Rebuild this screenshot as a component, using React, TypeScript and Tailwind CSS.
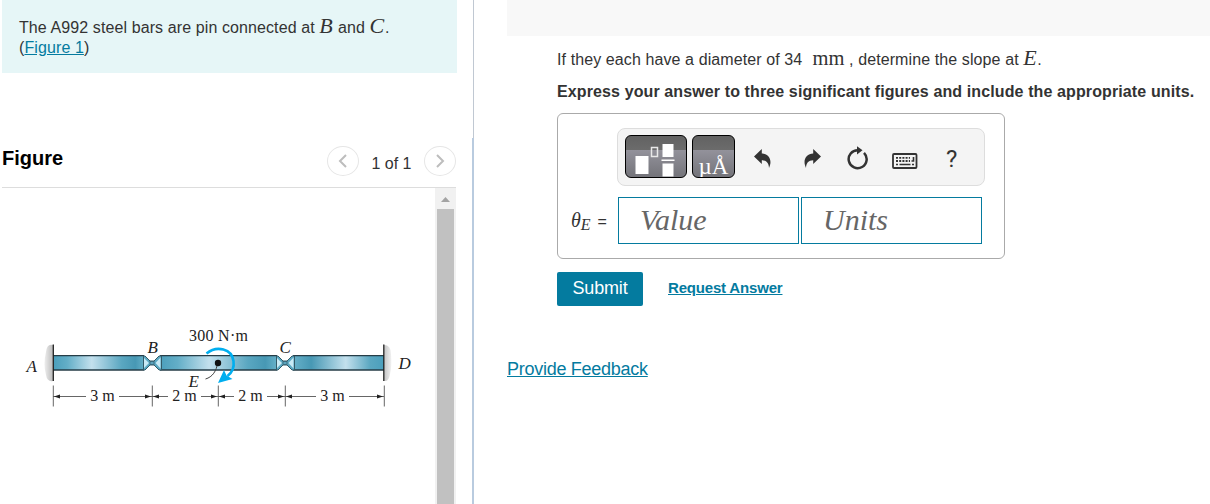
import type { ReactNode } from 'react';

function MathVar({ children }: { children: ReactNode }) {
  return (
    <span className="inline-block font-['Liberation_Serif',serif] text-[22px] leading-none tracking-[0.7px] italic">
      {children}
    </span>
  );
}

function PagerButton({ direction }: { direction: 'prev' | 'next' }) {
  return (
    <button
      aria-label={direction}
      className="flex h-[30px] w-8 items-center justify-center rounded-[50%] border border-[#e6e6e6] text-[#bdbdbd]"
    >
      <svg width="12" height="16" viewBox="0 0 12 16" fill="none" stroke="currentColor" strokeWidth="2">
        <path d={direction === 'prev' ? 'M9 2 3 8l6 6' : 'M3 2l6 6-6 6'} />
      </svg>
    </button>
  );
}

const segments = [
  { x1: 53, x2: 152, label: '3 m', cx: 102 },
  { x1: 152, x2: 218, label: '2 m', cx: 184 },
  { x1: 218, x2: 285, label: '2 m', cx: 250 },
  { x1: 285, x2: 384, label: '3 m', cx: 332 },
];

function Pin({ x }: { x: number }) {
  return (
    <g>
      <path
        d={`M${x - 8.5} 356 H${x - 7} L${x - 2} 361 H${x + 2} L${x + 7} 356 H${x + 9.5} V370 H${x + 7} L${x + 2} 365 H${x - 2} L${x - 7} 370 H${x - 8.5}Z`}
        fill="#5ba9c3"
        stroke="#345b68"
        strokeWidth="1"
      />
      <path d={`M${x - 8} 358v10l5-5zM${x + 8.5} 357.500v11l-5-5.500z`} fill="#c9eaf5" />
      <rect x={x - 2} y="361.5" width="4" height="3" fill="#5ba4bd" stroke="#345b68" strokeWidth=".7" />
    </g>
  );
}

function BeamDiagram() {
  return (
    <svg
      width="433"
      height="316"
      viewBox="2 188 433 316"
      className="block shrink-0 font-['Liberation_Serif',serif]"
      fill="#222"
    >
      <defs>
        <linearGradient id="steel">
          <stop offset="0" stopColor="#4b9fbc" />
          <stop offset=".15" stopColor="#63aec7" />
          <stop offset=".42" stopColor="#c3e0ed" />
          <stop offset=".75" stopColor="#5aa7c1" />
          <stop offset=".9" stopColor="#4798b4" />
          <stop offset="1" stopColor="#67b1c9" />
        </linearGradient>
        <linearGradient id="steelRight">
          <stop offset="0" stopColor="#67b1c9" />
          <stop offset=".2" stopColor="#4798b4" />
          <stop offset=".58" stopColor="#c3e0ed" />
          <stop offset=".85" stopColor="#5aa7c1" />
          <stop offset="1" stopColor="#4b9fbc" />
        </linearGradient>
        <linearGradient id="wallLeft">
          <stop offset="0" stopColor="#eee" />
          <stop offset="1" stopColor="#bbb" />
        </linearGradient>
        <linearGradient id="wallRight">
          <stop offset="0" stopColor="#c4c4c4" />
          <stop offset="1" stopColor="#f2f2f2" />
        </linearGradient>
      </defs>

      {/* Fixed supports */}
      <path d="M53 345q-6-2-7 7-3 12 0 23 1 7 7 6z" fill="url(#wallLeft)" />
      <path d="M384 345q7 0 7 9 1 12-1 20-1 8-6 7z" fill="url(#wallRight)" />

      {/* Bars */}
      <rect x="53.5" y="356" width="91" height="14" fill="url(#steel)" />
      <rect x="160" y="356" width="117" height="14" fill="url(#steel)" />
      <rect x="293" y="356" width="91" height="14" fill="url(#steelRight)" />
      <path
        d="M53 355.7H144M53 370H144M160 355.7H277M160 370H277M293 355.7H384M293 370H384"
        stroke="#263d47"
        strokeWidth="1.3"
      />
      <path d="M53.3 344.5v36.5M383.8 344.5v36.5" stroke="#222" strokeWidth="1.3" />
      <Pin x={152} />
      <Pin x={285} />

      {/* Applied couple */}
      <path d="M206.5 353.5C217 345 232 349 233.5 361c1 7-2 12-6 15" fill="none" stroke="#00aeef" strokeWidth="2.6" />
      <path d="M218 383l6-13 2.500 5.500 6 3.500z" fill="#00aeef" />
      <path d="M217.500 363c-1 8-5 14-12 16" fill="none" stroke="#444" />
      <circle cx="218" cy="363" r="3.200" fill="#111" />

      {/* Dimension line */}
      {[53, 152, 218, 285, 384].map((x) => (
        <path key={x} d={`M${x + 0.3} 385.500v21`} stroke="#666" strokeWidth="1" />
      ))}
      {segments.map((s) => (
        <g key={s.x1}>
          <path
            d={`M${s.x1} 396.500H${s.cx - 16}M${s.cx + 17} 396.500H${s.x2}`}
            stroke="#555"
            strokeWidth=".9"
          />
          <path d={`M${s.x1 + 1} 396.500l6-2v4zM${s.x2 - 1} 396.500l-6-2v4z`} />
          <text x={s.cx + 0.5} y="401" textAnchor="middle" fontSize="16">
            {s.label}
          </text>
        </g>
      ))}
      <text x="189" y="340.500" fontSize="16" textLength="59">300 N·m</text>
      <g fontStyle="italic" fontSize="17">
        <text x="26.500" y="372">A</text>
        <text x="147.500" y="353">B</text>
        <text x="188.500" y="386.500">E</text>
        <text x="279.500" y="353">C</text>
        <text x="398.500" y="369">D</text>
      </g>
    </svg>
  );
}

function UndoIcon() {
  return (
    <svg width="18" height="20" viewBox="0 0 18 20" fill="#333">
      <path d="M0 7.500 7.800 0v4.500c7 .2 11 6.500 7.200 14.500-.2-4.800-2.300-7.600-7.200-7.700V15z" />
    </svg>
  );
}

function TemplateToolbar() {
  return (
    <div className="ml-[59px] flex h-[58px] w-[368px] items-start rounded-lg border border-[#ddd] bg-[#f4f4f4] pt-[6px] pl-[7px] text-[#333]">
      <button
        aria-label="Templates"
        className="h-[43px] w-[62px] shrink-0 overflow-hidden rounded-md border border-black bg-[linear-gradient(#626262_0,#6b6b6b_33%,#93929b_34%,#74747a_100%)]"
      >
        <svg width="60" height="41" viewBox="0 0 60 41" fill="#fff">
          <path d="M9.500 20h13v18h-13zM36.500 8h11v13h-11zM36.500 27.500h11v13h-11zM35.500 23.500h13V25h-13z" />
          <rect x="25.500" y="11.500" width="6" height="9" fill="none" stroke="#e8e8e8" strokeWidth="1.500" />
        </svg>
      </button>
      <button
        aria-label="Units"
        className="ml-[5px] h-[43px] w-[43px] shrink-0 overflow-hidden rounded-md border border-black bg-[linear-gradient(#626262_0,#6b6b6b_33%,#93929b_34%,#74747a_100%)] pt-[12px] text-center font-['Liberation_Serif',serif] text-[23px] leading-[37px] text-white"
      >
        µÅ
      </button>
      <button aria-label="Undo" className="mt-[14px] ml-[19px]">
        <UndoIcon />
      </button>
      <button aria-label="Redo" className="mt-[14px] ml-[31px] -scale-x-100">
        <UndoIcon />
      </button>
      <button aria-label="Reset" className="mt-[11px] ml-[26px]">
        <svg width="22" height="24" viewBox="0 0 22 24" fill="none" stroke="#333" strokeWidth="2.500">
          <path d="M11 4.200A9 9 0 1 0 17 6.800" />
          <path d="M10 .2 15.500 4.200 10 8.600z" fill="#333" stroke="none" />
        </svg>
      </button>
      <button aria-label="Keyboard" className="mt-[18px] ml-[23px]">
        <svg width="26" height="16" viewBox="0 0 26 16" fill="none" stroke="#333">
          <rect x="1" y="1" width="23.500" height="14" rx="1" strokeWidth="1.800" />
          <path d="M4 4.800h14M4 8h14" strokeWidth="1.800" strokeDasharray="2 1.200" />
          <path d="M4 11.500h2M7.500 11.500h11M20 11.500h2M19.500 8H21.500V4" strokeWidth="1.600" />
        </svg>
      </button>
      <button aria-label="Help" className="mt-[10px] ml-[28px] font-['Roboto',sans-serif] text-[24px] leading-[28px]">
        ?
      </button>
    </div>
  );
}

export default function App() {
  return (
    <div className="flex h-[504px] w-[1210px] overflow-hidden bg-white font-['Liberation_Sans',sans-serif] text-[16px] leading-5 text-[#333]">
      {/* Problem statement and figure */}
      <aside className="flex w-[472px] shrink-0 flex-col pl-[2px]">
        <div className="h-[73px] w-[455px] bg-[#e6f6f7] pt-[15px] pl-[17px]">
          <p className="h-5 tracking-[0.1px] whitespace-nowrap">
            The A992 steel bars are pin connected at <MathVar>B</MathVar> and <MathVar>C</MathVar>.
          </p>
          <p className="mt-[3px] tracking-[0.1px]">
            (<a href="#figure" className="text-[#047b9f] underline">Figure 1</a>)
          </p>
        </div>

        <div className="mt-[73px] flex h-[42px] w-[454px] border-b border-[#ddd]">
          <h2 className="mt-[2px] flex-1 text-[20px] font-bold text-black">Figure</h2>
          <PagerButton direction="prev" />
          <span className="mt-[8px] w-[65px] text-center">1 of 1</span>
          <PagerButton direction="next" />
        </div>

        <div className="flex w-[454px] flex-1">
          <BeamDiagram />
          <div className="flex w-[21px] flex-col items-center bg-[#f1f1f1]">
            <svg width="9" height="5" viewBox="0 0 9 5" className="mt-[9px] mb-[7px] shrink-0" fill="#a3a3a3">
              <path d="M0 5 4.500 0 9 5z" />
            </svg>
            <div className="w-[17px] flex-1 bg-[#c1c1c1]" />
          </div>
        </div>
      </aside>

      <div className="flex w-[2px] shrink-0 flex-col items-end">
        <div className="h-[138px] w-px bg-[#c0c8d2]" />
        <div className="w-[2px] flex-1 bg-[#b9cbdf]" />
      </div>

      {/* Question part */}
      <main className="flex-1 pl-[33px]">
        <div className="h-9 bg-[#f8f8f8]" />
        <div className="pt-[11px] pl-[50px]">
          <p className="h-5 tracking-[0.1px] whitespace-nowrap">
            If they each have a diameter of 34 &nbsp;
            <span className="ml-px inline-block font-['Liberation_Serif',serif] text-[20.500px] leading-none">mm</span>
            {' '}, determine the slope at <MathVar>E</MathVar>.
          </p>
          <p className="mt-[15px] font-bold tracking-[0.115px] whitespace-nowrap">
            Express your answer to three significant figures and include the appropriate units.
          </p>

          <div className="mt-[11px] h-[146px] w-[448px] rounded-md border border-[#aaa] pt-[14px]">
            <TemplateToolbar />
            <div className="mt-[11px] flex items-center">
              <div className="w-[60px] pl-[13px] whitespace-nowrap">
                <span className="font-['Liberation_Serif',serif] text-[20px] italic">θ</span>
                <sub className="bottom-[-3px] font-['Liberation_Serif',serif] text-[16px] italic">E</sub>
                <span className="ml-[7px] text-[16px]">=</span>
              </div>
              <div className="h-[47px] w-[181px] border border-[#047b9f] pl-[21px] font-['Liberation_Serif',serif] text-[30px] leading-[43px] text-[#666] italic">
                Value
              </div>
              <div className="ml-[2px] h-[47px] w-[181px] border border-[#047b9f] pl-[21px] font-['Liberation_Serif',serif] text-[30px] leading-[43px] text-[#666] italic">
                Units
              </div>
            </div>
          </div>

          <div className="mt-[13px] flex items-center">
            <button className="h-[34px] w-[86px] rounded-[2px] bg-[#047b9f] pb-[2px] text-[18px] tracking-[-0.150px] text-white">
              Submit
            </button>
            <a href="#answer" className="mb-[2px] ml-[25px] text-[15px] font-bold tracking-[-0.180px] text-[#047b9f] underline">
              Request Answer
            </a>
          </div>
        </div>
        <a href="#feedback" className="mt-[53px] block w-fit text-[18px] tracking-[-0.270px] text-[#047b9f] underline">
          Provide Feedback
        </a>
      </main>
    </div>
  );
}
